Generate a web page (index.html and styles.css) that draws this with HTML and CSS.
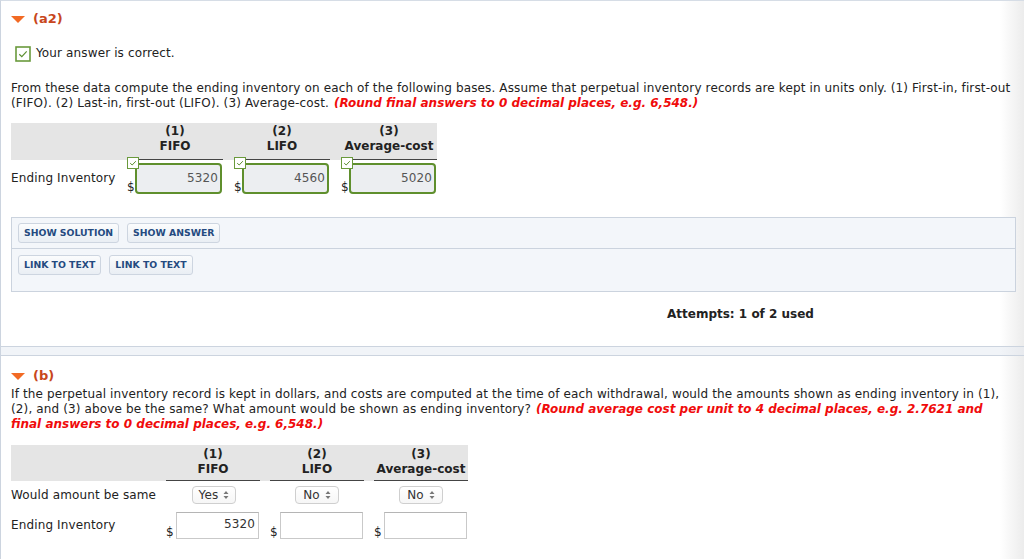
FILE: index.html
```html
<!DOCTYPE html>
<html lang="en">
<head>
<meta charset="utf-8">
<title>Inventory question</title>
<link rel="stylesheet" href="styles.css">
</head>
<body>
<section class="panel panel-a">
  <h2 class="part-title"><span class="caret"></span>(a2)</h2>
  <div class="status">
    <span class="check-box"><svg viewBox="0 0 16 16" width="16" height="16"><rect x="1" y="1" width="14" height="14" fill="#fff" stroke="#6a9a3c" stroke-width="1.6"/><path d="M4.3 8.2 L6.8 10.6 L11.7 5.4" fill="none" stroke="#5b8f2f" stroke-width="1.2"/></svg></span>
    <span>Your answer is correct.</span>
  </div>
  <p class="question">From these data compute the ending inventory on each of the following bases. Assume that perpetual inventory records are kept in units only. (1) First-in, first-out (FIFO). (2) Last-in, first-out (LIFO). (3) Average-cost. <em class="hint">(Round final answers to 0 decimal places, e.g. 6,548.)</em></p>

  <div class="grid grid-a">
    <div class="grid-head">
      <div class="head-blank"></div>
      <div class="head-cell">(1)<br>FIFO</div>
      <div class="head-cell">(2)<br>LIFO</div>
      <div class="head-cell">(3)<br>Average-cost</div>
    </div>
    <div class="grid-row row-a">
      <div class="row-label">Ending Inventory</div>
      <div class="amount-cell">
        <span class="mini-check"><svg viewBox="0 0 12 12" width="12" height="12"><rect x="0.5" y="0.5" width="11" height="11" fill="#fff" stroke="#6a9a3c"/><path d="M3.2 6.2 L5.2 8 L8.8 4.2" fill="none" stroke="#5b8f2f" stroke-width="1"/></svg></span>
        <span class="dollar">$</span><span class="answer-box correct">5320</span>
      </div>
      <div class="amount-cell">
        <span class="mini-check"><svg viewBox="0 0 12 12" width="12" height="12"><rect x="0.5" y="0.5" width="11" height="11" fill="#fff" stroke="#6a9a3c"/><path d="M3.2 6.2 L5.2 8 L8.8 4.2" fill="none" stroke="#5b8f2f" stroke-width="1"/></svg></span>
        <span class="dollar">$</span><span class="answer-box correct">4560</span>
      </div>
      <div class="amount-cell">
        <span class="mini-check"><svg viewBox="0 0 12 12" width="12" height="12"><rect x="0.5" y="0.5" width="11" height="11" fill="#fff" stroke="#6a9a3c"/><path d="M3.2 6.2 L5.2 8 L8.8 4.2" fill="none" stroke="#5b8f2f" stroke-width="1"/></svg></span>
        <span class="dollar">$</span><span class="answer-box correct">5020</span>
      </div>
    </div>
  </div>

  <div class="tools">
    <div class="tool-row first"><button class="tool-btn">SHOW SOLUTION</button><button class="tool-btn">SHOW ANSWER</button></div>
    <div class="tool-row second"><button class="tool-btn">LINK TO TEXT</button><button class="tool-btn">LINK TO TEXT</button></div>
  </div>
  <div class="attempts">Attempts: 1 of 2 used</div>
</section>
<div class="separator"></div>
<section class="panel panel-b">
  <h2 class="part-title"><span class="caret"></span>(b)</h2>
  <p class="question q-b">If the perpetual inventory record is kept in dollars, and costs are computed at the time of each withdrawal, would the amounts shown as ending inventory in (1), (2), and (3) above be the same? What amount would be shown as ending inventory? <em class="hint">(Round average cost per unit to 4 decimal places, e.g. 2.7621 and final answers to 0 decimal places, e.g. 6,548.)</em></p>

  <div class="grid grid-b">
    <div class="grid-head">
      <div class="head-blank"></div>
      <div class="head-cell">(1)<br>FIFO</div>
      <div class="head-cell">(2)<br>LIFO</div>
      <div class="head-cell">(3)<br>Average-cost</div>
    </div>
    <div class="grid-row row-select">
      <div class="row-label">Would amount be same</div>
      <div class="select-cell"><span class="fake-select">Yes<svg class="updown" viewBox="0 0 6 10" width="6" height="10"><path d="M3 1 L5.5 4 L0.5 4 Z M3 9 L5.5 6 L0.5 6 Z" fill="#777"/></svg></span></div>
      <div class="select-cell"><span class="fake-select">No<svg class="updown" viewBox="0 0 6 10" width="6" height="10"><path d="M3 1 L5.5 4 L0.5 4 Z M3 9 L5.5 6 L0.5 6 Z" fill="#777"/></svg></span></div>
      <div class="select-cell"><span class="fake-select">No<svg class="updown" viewBox="0 0 6 10" width="6" height="10"><path d="M3 1 L5.5 4 L0.5 4 Z M3 9 L5.5 6 L0.5 6 Z" fill="#777"/></svg></span></div>
    </div>
    <div class="grid-row row-input">
      <div class="row-label">Ending Inventory</div>
      <div class="amount-cell"><span class="dollar">$</span><span class="plain-box">5320</span></div>
      <div class="amount-cell"><span class="dollar">$</span><span class="plain-box"></span></div>
      <div class="amount-cell"><span class="dollar">$</span><span class="plain-box"></span></div>
    </div>
  </div>
</section>
</body>
</html>
```

FILE: styles.css
```css
html, body {
  margin: 0;
  padding: 0;
}
body {
  font-family: "DejaVu Sans", Verdana, sans-serif;
  font-size: 12px;
  line-height: 15px;
  letter-spacing: 0.13px;
  color: #222;
  background: #fff;
  overflow: hidden;
}

.panel {
  border-left: 1px solid #ccd4df;
  background: linear-gradient(to right, #fff calc(100% - 24px), #ececec);
  padding-left: 10px;
}
.panel-a {
  border-top: 1px solid #d6dde6;
  border-bottom: 1px solid #ccd4df;
  padding-top: 10px;
  padding-bottom: 24px;
}
.separator {
  height: 8px;
  border-left: 1px solid #ccd4df;
  background: linear-gradient(to right, #f1f4f8 calc(100% - 24px), #e8eaee);
}
.panel-b {
  border-top: 1px solid #ccd4df;
  padding-top: 12px;
  height: 192px;
}

.part-title {
  margin: 0;
  display: flex;
  align-items: center;
  font-size: 13px;
  line-height: 15px;
  font-weight: bold;
  letter-spacing: 0;
  color: #c8471d;
}
.caret {
  width: 0;
  height: 0;
  border-left: 7px solid transparent;
  border-right: 7px solid transparent;
  border-top: 7px solid #f26a24;
  margin-right: 8px;
  margin-top: 1px;
}

.status {
  display: flex;
  align-items: center;
  margin-top: 19px;
  height: 17px;
  padding-left: 4px;
}
.check-box {
  display: block;
  width: 16px;
  height: 16px;
  margin-right: 5px;
}
.check-box svg { display: block; }

.question {
  margin: 19px 0 0;
  padding-right: 8px;
}
.q-b {
  margin-top: 4px;
}
.hint {
  color: #f00b0b;
  font-weight: bold;
  font-style: italic;
  letter-spacing: 0;
  padding-left: 1px;
}

.grid {
  width: max-content;
}
.grid-a { margin-top: 12px; }
.grid-b { margin-top: 13px; }

.grid-head,
.grid-row {
  display: grid;
  align-items: center;
}
.grid-a .grid-head,
.grid-a .grid-row {
  grid-template-columns: 105px repeat(3, 96px);
  column-gap: 11px;
}
.grid-b .grid-head,
.grid-b .grid-row {
  grid-template-columns: 145px repeat(3, 94px);
  column-gap: 10px;
}
.row-label {
  white-space: nowrap;
}
.grid-head {
  background: #e5e5e5;
  align-items: end;
}
.head-cell {
  text-align: center;
  font-weight: bold;
  letter-spacing: 0;
  border-bottom: 1px solid #444;
  padding-top: 1px;
  padding-bottom: 5px;
}
.grid-b .head-cell {
  padding-top: 2px;
  padding-bottom: 3px;
}

.row-a { margin-top: 3px; }
.amount-cell {
  position: relative;
  display: flex;
  align-items: flex-end;
}
.dollar {
  width: 8px;
  line-height: 13px;
  letter-spacing: 0;
}
.answer-box {
  box-sizing: border-box;
  width: 87px;
  height: 31px;
  border: 2px solid #5f8f2d;
  border-radius: 4px;
  background: #eceef1;
  color: #555;
  text-align: right;
  padding-right: 2px;
  line-height: 26px;
}
.mini-check {
  position: absolute;
  left: 0;
  top: -6px;
  width: 12px;
  height: 12px;
}
.mini-check svg { display: block; }

.row-select { margin-top: 5px; }
.select-cell {
  display: flex;
  justify-content: center;
}
.select-cell:nth-child(2) { padding-left: 2px; }
.fake-select {
  box-sizing: border-box;
  width: 44px;
  height: 18px;
  border: 1px solid #cfcfcf;
  border-radius: 4px;
  background: linear-gradient(#fff, #f6f6f6);
  display: flex;
  align-items: center;
  justify-content: center;
  gap: 5px;
  color: #333;
  font-size: 12px;
}
.updown { display: block; }

.row-input { margin-top: 8px; }
.row-input .dollar { width: 10px; }
.plain-box {
  box-sizing: border-box;
  width: 83px;
  height: 27px;
  border: 1px solid #c9c9c9;
  border-top-color: #b5b5b5;
  background: #fff;
  text-align: right;
  padding-right: 3px;
  line-height: 22px;
  color: #333;
}

.tools {
  margin-top: 23px;
  margin-right: 8px;
  border: 1px solid #cbd3de;
  background: #f3f6fa;
}
.tool-row {
  display: flex;
  gap: 8px;
  padding-left: 6px;
}
.tool-row.first {
  padding-top: 5px;
  padding-bottom: 5px;
  border-bottom: 1px solid #cbd3de;
}
.tool-row.second {
  padding-top: 6px;
  padding-bottom: 16px;
}
.tool-btn {
  height: 20px;
  padding: 0 5px;
  border: 1px solid #cdd5e0;
  border-radius: 3px;
  background: linear-gradient(#fbfcfd, #e9eef4);
  color: #244a80;
  font-family: "DejaVu Sans", Verdana, sans-serif;
  font-weight: bold;
  font-size: 9.3px;
  line-height: 18px;
  letter-spacing: 0;
}

.attempts {
  margin-top: 15px;
  padding-left: 656px;
  font-weight: bold;
  letter-spacing: 0;
}
```
